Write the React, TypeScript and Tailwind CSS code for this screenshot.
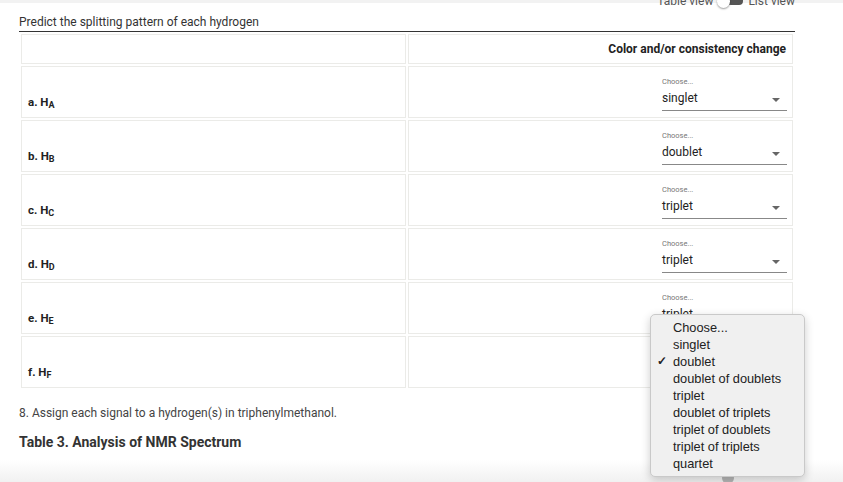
const rows = [
  { letter: 'a', sub: 'A', value: 'singlet' },
  { letter: 'b', sub: 'B', value: 'doublet' },
  { letter: 'c', sub: 'C', value: 'triplet' },
  { letter: 'd', sub: 'D', value: 'triplet' },
  { letter: 'e', sub: 'E', value: 'triplet' },
  { letter: 'f', sub: 'F', value: '' },
];

const options = [
  'Choose...',
  'singlet',
  'doublet',
  'doublet of doublets',
  'triplet',
  'doublet of triplets',
  'triplet of doublets',
  'triplet of triplets',
  'quartet',
];

function SelectField({ value }: { value: string }) {
  if (!value) return null;
  return (
    <div className="w-[125px] flex flex-col">
      <span className="text-[7.5px] leading-[9px] text-[#777]">Choose...</span>
      <div className="flex items-start justify-between h-[25px] border-b border-[#888] pt-[5px]">
        <span className="text-[12px] leading-[14px] text-[#222]">{value}</span>
        <span className="w-0 h-0 border-x-[4px] border-x-transparent border-t-[4px] border-t-[#666] mr-[7px] mt-[7px]" />
      </div>
    </div>
  );
}

export default function App() {
  return (
    <div
      className="relative w-[843px] h-[482px] overflow-hidden bg-white text-[#333]"
      style={{ fontFamily: 'Roboto, "Liberation Sans", sans-serif' }}
    >
      {/* top toggle strip */}
      <div className="h-[3px] bg-[#f2f2f2]" />
      <div className="absolute top-[-8px] right-[48px] flex items-center gap-[4px] text-[12px] text-[#555]">
        <span>Table view</span>
        <div className="relative w-[27px] h-[12px] flex items-center">
          <div className="ml-[10px] w-[16px] h-[8px] rounded-full bg-[#555]" />
          <div className="absolute left-0 w-[13px] h-[13px] rounded-full bg-white shadow-[0_1px_2px_rgba(0,0,0,0.4)]" />
        </div>
        <span>List view</span>
      </div>

      <div className="pl-[19px] pr-[48px] pt-[12px]">
        <p className="text-[12px] leading-[14px] text-[#333] mb-[2px]">
          Predict the splitting pattern of each hydrogen
        </p>
        <div className="border-t border-[#333]">
          <table className="w-full border-separate border-spacing-[2px]">
            <tbody>
              <tr>
                <td className="w-1/2 h-[30px] border border-[#ebebe8]" />
                <td className="w-1/2 h-[30px] border border-[#ebebe8] text-right pr-[6px] text-[12px] font-bold text-[#222]">
                  Color and/or consistency change
                </td>
              </tr>
              {rows.map((r) => (
                <tr key={r.letter}>
                  <td className="h-[52px] border border-[#ebebe8] align-bottom pl-[6px] pb-[4px]">
                    <span className="text-[11.5px] leading-[12px] font-bold text-[#222]">
                      {r.letter}. H<sub className="text-[9px] leading-none">{r.sub}</sub>
                    </span>
                  </td>
                  <td className="h-[52px] border border-[#ebebe8] align-top pt-[10px] pr-[5px]">
                    <div className="flex justify-end">
                      <SelectField value={r.value} />
                    </div>
                  </td>
                </tr>
              ))}
            </tbody>
          </table>
        </div>

        <p className="mt-[14px] text-[12px] text-[#444]">
          8. Assign each signal to a hydrogen(s) in triphenylmethanol.
        </p>
        <h3 className="mt-[10px] text-[14px] font-bold text-[#333]">Table 3. Analysis of NMR Spectrum</h3>
      </div>

      {/* bottom fade */}
      <div className="absolute left-0 right-0 bottom-0 h-[22px] bg-gradient-to-b from-white to-[#f1f1f1]" />
      <div className="absolute left-[722px] top-[472px] w-[12px] h-[12px] rounded-full bg-[#b5b5b5]" />

      {/* open native select menu */}
      <div
        className="absolute left-[650px] top-[314px] w-[155px] h-[163px] rounded-[5px] bg-[#f0f0f0] border border-[#c9c9c9] shadow-[0_3px_10px_rgba(0,0,0,0.2)] pt-[4px]"
        style={{ fontFamily: '"Liberation Sans", Arial, sans-serif' }}
      >
        {options.map((o) => (
          <div key={o} className="relative h-[17px] pl-[22px] text-[12.8px] leading-[17px] text-[#222]">
            {o === 'doublet' && (
              <span className="absolute left-[6px] top-0 text-[12px] font-bold">✓</span>
            )}
            {o}
          </div>
        ))}
      </div>
    </div>
  );
}
